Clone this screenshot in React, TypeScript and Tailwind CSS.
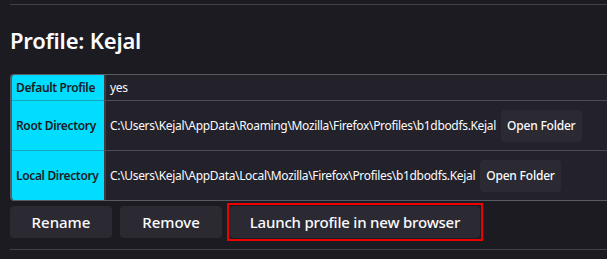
const rows = [
  { label: 'Default Profile', value: 'yes', folder: false },
  {
    label: 'Root Directory',
    value: 'C:\\Users\\Kejal\\AppData\\Roaming\\Mozilla\\Firefox\\Profiles\\b1dbodfs.Kejal',
    folder: true,
  },
  {
    label: 'Local Directory',
    value: 'C:\\Users\\Kejal\\AppData\\Local\\Mozilla\\Firefox\\Profiles\\b1dbodfs.Kejal',
    folder: true,
  },
]

export default function App() {
  return (
    <div className="h-screen w-full overflow-hidden bg-[#1c1b22] text-[#fbfbfe] font-['Noto_Sans',sans-serif]">
      <div className="w-[660px] pl-[10px]">
        {/* top rule */}
        <div className="mt-1 h-px bg-[#42414b]" />

        <h2 className="mt-[20px] text-[22px] leading-[30px] font-semibold tracking-[-0.2px]">Profile: Kejal</h2>

        {/* profile table */}
        <div className="mt-[19px] overflow-hidden rounded-[4px] border border-l-2 border-[#5b5b66]">
          {rows.map((row, i) => (
            <div key={row.label} className={`flex ${i === 0 ? 'h-[25px]' : 'h-[50px]'}`}>
              <div
                className={`flex w-[92px] shrink-0 items-center bg-[#00ddff] pl-1 text-[12px] font-semibold tracking-[-0.35px] whitespace-nowrap text-[#1c1b22] ${
                  i === 0 ? '' : 'border-t border-[#17a3bb]'
                }`}
              >
                {row.label}
              </div>
              <div className={`w-[2px] shrink-0 bg-[#3d3c46] ${i === 0 ? '' : 'border-t border-[#4e4d57]'}`} />
              <div
                className={`flex flex-1 items-center bg-[#23222b] pl-1 text-[12px] ${
                  i === 0 ? '' : 'border-t border-[#4e4d57]'
                }`}
              >
                <span className="whitespace-nowrap tracking-[-0.33px]">{row.value}</span>
                {row.folder && (
                  <button className="ml-[5px] h-[32px] rounded-[4px] bg-[#2b2a33] px-[6px] text-[12px] font-medium tracking-[-0.2px] text-[#fbfbfe]">
                    Open Folder
                  </button>
                )}
              </div>
            </div>
          ))}
        </div>

        {/* actions */}
        <div className="mt-[5px] flex gap-2">
          <button className="h-[32px] w-[102px] rounded-[4px] bg-[#2b2a33] text-[15px] font-medium">Rename</button>
          <button className="h-[32px] w-[102px] rounded-[4px] bg-[#2b2a33] text-[15px] font-medium">Remove</button>
          {/* red highlight box around the launch button */}
          <div className="outline-2 outline-offset-1 outline-[#ee0000]">
            <button className="block h-[32px] w-[250px] rounded-[4px] bg-[#2b2a33] text-[15px] font-medium tracking-[-0.2px]">
              Launch profile in new browser
            </button>
          </div>
        </div>

        <div className="mt-[11px] h-px bg-[#42414b]" />
      </div>
    </div>
  )
}
